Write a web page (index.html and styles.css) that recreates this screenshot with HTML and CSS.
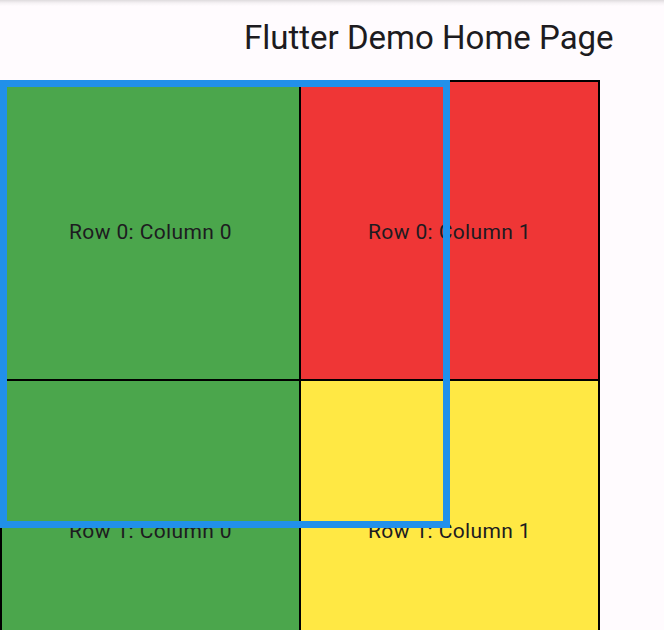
FILE: index.html
```html
<!DOCTYPE html>
<html lang="en">
<head>
<meta charset="utf-8">
<title>Flutter Demo Home Page</title>
<link rel="stylesheet" href="styles.css">
</head>
<body>
<header class="app-bar">
  <h1 class="title">Flutter Demo Home Page</h1>
</header>
<main class="content">
  <div class="table">
    <div class="cell green">Row 0: Column 0</div>
    <div class="cell red">Row 0: Column 1</div>
    <div class="cell green">Row 1: Column 0</div>
    <div class="cell yellow">Row 1: Column 1</div>
  </div>
  <div class="highlight"></div>
</main>
</body>
</html>
```
FILE: styles.css
```css
html, body {
  margin: 0;
  padding: 0;
  width: 664px;
  height: 630px;
  overflow: hidden;
  background: #fffbfe;
  font-family: Roboto, "Noto Sans", sans-serif;
  color: #1d1b20;
}

.app-bar {
  height: 80px;
  display: flex;
  align-items: center;
  padding: 0 0 6px 244px;
  box-sizing: border-box;
  background: linear-gradient(to bottom, rgba(0,0,0,0.13) 0px, rgba(0,0,0,0.04) 3px, rgba(0,0,0,0) 6px), #fffbfe;
}

.title {
  margin: 0;
  font-size: 33px;
  font-weight: 400;
  line-height: normal;
  color: #1d1b20;
}

.content {
  position: relative;
}

.table {
  width: 600px;
  height: 600px;
  box-sizing: border-box;
  display: grid;
  grid-template-columns: 1fr 1fr;
  grid-template-rows: 1fr 1fr;
  gap: 2px;
  border: 2px solid #000;
  background: #000;
}

.cell {
  display: flex;
  align-items: center;
  justify-content: center;
  padding-top: 2px;
  font-size: 21px;
  letter-spacing: 0.375px;
  color: #1d1b20;
}

.green { background: #4ba64c; }
.red { background: #ef3636; }
.yellow { background: #ffe844; }

.highlight {
  position: absolute;
  left: 0;
  top: 0;
  width: 450px;
  height: 448px;
  box-sizing: border-box;
  border: 7.5px solid #2190ea;
}
```
